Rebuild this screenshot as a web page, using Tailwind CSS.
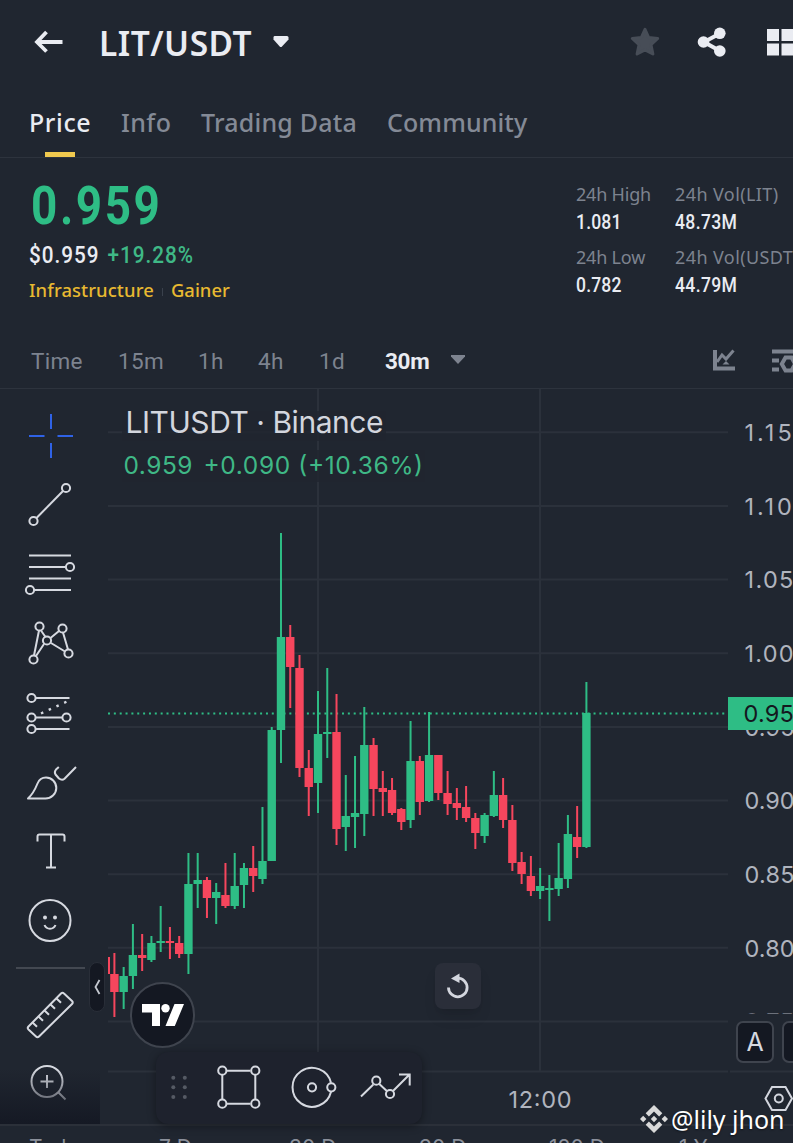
<!DOCTYPE html>
<html lang="en">
<head>
  <meta charset="UTF-8" />
  <meta name="viewport" content="width=device-width, initial-scale=1" />
  <title>LIT/USDT</title>
  <script src="https://cdn.jsdelivr.net/npm/@tailwindcss/browser@4"></script>
</head>
<body class="w-[793px] h-[1143px] overflow-hidden bg-[#202630] font-['Noto_Sans',sans-serif] text-[#eaecf2] whitespace-nowrap">

  <header class="flex items-center h-[84px] pl-[33px]">
    <svg class="w-[30px] h-6 shrink-0" viewBox="0 0 30 24" fill="none" stroke="#eaecf2" stroke-width="3.800"><path d="M29.500 12H4M13.500 2L4 12l9.500 9.500" /></svg>
    <h1 class="ml-9 w-[174px] shrink-0 pt-[3px] text-[33.500px] leading-none font-semibold tracking-[0.500px]">LIT/USDT</h1>
    <svg class="w-4 h-3 shrink-0 -mt-[1px]" viewBox="0 0 16 12" fill="#eaecf2"><path d="M1.500 0h12.500q1.500 0 1.500 1.500v2L9 10.500q-1 1-2.300 0L.5 3.500v-2Q.5 0 1.500 0z" /></svg>
    <svg class="w-[30px] h-[30px] shrink-0 ml-[341px]" viewBox="0 0 30 30" fill="#474d57" stroke="#474d57" stroke-width="3" stroke-linejoin="round"><path d="M15 2.300l3.700 8.200 9 1-6.700 6.200 1.900 9.300-7.900-4-7.900 4 1.900-9.300L2.300 11.500l9-1z" /></svg>
    <svg class="w-[30px] h-[30px] shrink-0 ml-[37px]" viewBox="0 0 30 30" fill="#eaecf2"><path d="M23 6.500L7 15l16 9" fill="none" stroke="#eaecf2" stroke-width="4" /><circle cx="22.800" cy="6.300" r="5.800" /><circle cx="6.500" cy="15" r="5.800" /><circle cx="22.800" cy="24" r="5.800" /></svg>
    <svg class="w-[27px] h-[27px] shrink-0 ml-[40px]" viewBox="0 0 27 27" fill="#eaecf2"><path d="M0 0h12v12H0zM14.500 0h12v12h-12zM0 14.500h12v12H0zM14.500 14.500h12v12h-12z" /></svg>
  </header>

  <nav class="flex h-[74px] border-b border-[#2d333d] pl-[29px] text-[25px] font-medium leading-none text-[#848a96]">
    <div class="relative w-[92px] pt-[26px] tracking-[0.600px] text-[#eaecf2]">Price<span class="absolute left-4 bottom-0 w-[30px] h-[5px] bg-[#f0c94e]"></span></div>
    <div class="w-[80px] pt-[26px] tracking-[0.400px]">Info</div>
    <div class="w-[186px] pt-[26px] tracking-[0.200px]">Trading Data</div>
    <div class="pt-[26px] tracking-[0.100px]">Community</div>
  </nav>

  <section class="flex h-[165px]">
    <div class="w-[576px] shrink-0 pl-[29px]">
      <div class="mt-[21px] ml-[2px] h-[54px] text-[54px] leading-[54px] font-bold font-[Roboto] origin-left scale-x-[0.850] tracking-[3px] text-[#2ebd85]">0.959</div>
      <div class="mt-[9px] h-7 leading-7 text-[23px] font-medium font-[Roboto] flex gap-[9px] origin-left scale-x-[0.900] tracking-[1.100px]">
        <span>$0.959</span><span class="text-[#3fb886]">+19.28%</span>
      </div>
      <div class="mt-[6px] h-7 flex items-center text-[18.400px] font-medium text-[#e8b930]">
        <span class="w-[133px] tracking-[0.100px]">Infrastructure</span><span class="w-px h-2 mt-1 bg-[#3a414c]"></span><span class="ml-2">Gainer</span>
      </div>
    </div>
    <div class="pt-[22px] w-[99px] shrink-0 text-[18px] tracking-[-0.200px] text-[#7d838f]">
      <div class="h-[29px] leading-[29px]">24h High</div>
      <div class="h-[27px] leading-[27px] mb-[7px] font-[Roboto] font-medium text-[19.500px] origin-left scale-x-[0.900] tracking-[0.200px] text-[#eaecf2]">1.081</div>
      <div class="h-[29px] leading-[29px]">24h Low</div>
      <div class="h-[27px] leading-[27px] font-[Roboto] font-medium text-[19.500px] origin-left scale-x-[0.900] tracking-[0.200px] text-[#eaecf2]">0.782</div>
    </div>
    <div class="pt-[22px] w-[118px] shrink-0 overflow-hidden text-[18px] tracking-[0.400px] text-[#7d838f]">
      <div class="h-[29px] leading-[29px]">24h Vol(LIT)</div>
      <div class="h-[27px] leading-[27px] mb-[7px] font-[Roboto] font-medium text-[19.500px] origin-left scale-x-[0.900] text-[#eaecf2]">48.73M</div>
      <div class="h-[29px] leading-[29px]">24h Vol(USDT)</div>
      <div class="h-[27px] leading-[27px] font-[Roboto] font-medium text-[19.500px] origin-left scale-x-[0.900] text-[#eaecf2]">44.79M</div>
    </div>
  </section>

  <div class="flex items-center h-[66px] pt-[12px] pl-[31px] border-b border-[#2d333d] font-[Roboto] text-[22.500px] tracking-[0.300px] text-[#7d838f]">
    <span class="w-[87px] shrink-0">Time</span>
    <span class="w-[80px] shrink-0">15m</span>
    <span class="w-[60px] shrink-0">1h</span>
    <span class="w-[61px] shrink-0">4h</span>
    <span class="w-[66px] shrink-0">1d</span>
    <span class="w-[66px] shrink-0 font-bold tracking-[-0.300px] text-[#eaecf2]">30m</span>
    <svg class="w-[14px] h-[9px] shrink-0 -mt-[4px]" viewBox="0 0 14 9" fill="#7d838f"><path d="M0 0h14v1.500L7 9 0 1.500z" /></svg>
    <svg class="w-[22px] h-[22px] shrink-0 ml-[248px] -mt-[3px]" viewBox="0 0 22 22" fill="none" stroke="#7d838f" stroke-width="3"><path d="M2 1v18.500h20" stroke-width="4" /><path d="M4 13l5-7 4 4 7.500-8.500" /><path d="M9.500 15.500l3.500-3.500 3.500 3.500z" fill="#7d838f" stroke="none" /></svg>
    <svg class="w-[30px] h-[24px] shrink-0 ml-[37px] -mt-px" viewBox="0 0 30 24"><path d="M0 2.500h30M0 11.500h7M0 20.500h7" stroke="#7d838f" stroke-width="4" /><path d="M13.500 8.500h6l3.700 6.500-3.700 6.500h-6L9.800 15z" fill="none" stroke="#7d838f" stroke-width="4" /></svg>
  </div>

  <main class="relative flex h-[735px]">
    <!-- drawing tools -->
    <aside class="relative w-[100px] h-[735px] shrink-0 pt-[13px] flex flex-col items-center">
      <svg class="w-[60px] h-[69px] shrink-0" viewBox="0 -4.500 60 69" fill="none" stroke="#2f62e6" stroke-width="2"><path d="M31 7.500v15M31 36.500v15M9 29.500h15.500M37.500 29.500H53" /></svg>
      <svg class="w-[60px] h-[69px] shrink-0" viewBox="0 -4.500 60 69" fill="none" stroke="#d6d9e0" stroke-width="2"><circle cx="13.500" cy="45.500" r="4.100" /><circle cx="46" cy="12.500" r="4.100" /><path d="M16.500 42.500L43 15.500" /></svg>
      <svg class="w-[60px] h-[69px] shrink-0" viewBox="0 -4.500 60 69" fill="none" stroke="#d6d9e0" stroke-width="2"><path d="M9 11h42M9 22.500h37M9 34h42M14 45.500h37" /><circle cx="50" cy="22.500" r="4.100" /><circle cx="10" cy="45.500" r="4.100" /></svg>
      <svg class="w-[60px] h-[69px] shrink-0" viewBox="0 -4.500 60 69" fill="none" stroke="#d6d9e0" stroke-width="2"><path d="M19 17l-5 25M21 17l4.500 6.500M30.500 24.500l8.500-7M24 30.500l-8 12M31 29.500l14 8.500M43 19l5 17" /><circle cx="19.500" cy="13" r="4.100" /><circle cx="42.500" cy="15" r="4.100" /><circle cx="27" cy="27" r="4.100" /><circle cx="13.500" cy="46" r="4.100" /><circle cx="48.500" cy="40" r="4.100" /></svg>
      <svg class="w-[60px] h-[69px] shrink-0" viewBox="0 -4.500 60 69" fill="none" stroke="#d6d9e0" stroke-width="2"><path d="M16 15.500h33.500M16 35h26M16 46.500h33.500" /><path d="M21 31l26-12" stroke-dasharray="2.500 6" stroke-width="2.400" /><circle cx="11.500" cy="15.500" r="4.100" /><circle cx="11.500" cy="35" r="4.100" /><circle cx="46.500" cy="35" r="4.100" /><circle cx="11.500" cy="46.500" r="4.100" /></svg>
      <svg class="w-[60px] h-[69px] shrink-0" viewBox="0 -4.500 60 69" fill="none" stroke="#d6d9e0" stroke-width="2" stroke-linejoin="round"><path d="M8 47h17.500c5.500 0 10.800-4.500 10.800-10.500S31.500 26 26 26c-4 0-7 2.200-8.500 6C15.500 37 13.500 42 8 47z" /><path d="M38.800 15.500L36 18q-2 2.500-.5 5l3.500 4q3 2.300 5.500.3L56 15.500" /></svg>
      <svg class="w-[60px] h-[69px] shrink-0" viewBox="0 -4.500 60 69" fill="none" stroke="#d6d9e0" stroke-width="2"><path d="M17.500 21v-5q0-2 2-2h23q2 0 2 2v5M31 14v33M26 47h10" /></svg>
      <svg class="w-[60px] h-[69px] shrink-0" viewBox="0 -4.500 60 69" fill="none" stroke="#d6d9e0" stroke-width="2"><circle cx="30" cy="31" r="20.500" /><path d="M24.500 35.500c2 5 9 5 11 0" /><circle cx="25" cy="28" r="2" fill="#d6d9e0" stroke="none" /><circle cx="35" cy="28" r="2" fill="#d6d9e0" stroke="none" /></svg>
      <div class="mt-[13px] mb-[11px] w-[69px] h-[2px] shrink-0 bg-[#434851]"></div>
      <svg class="w-[60px] h-[69px] shrink-0" viewBox="0 -4.500 60 69" fill="none" stroke="#d6d9e0" stroke-width="2" stroke-linejoin="round"><path d="M8.500 42L41 9q1.500-1.500 3 0l8 7.500q1.500 1.500 0 3L19 52q-1.500 1.500-3 0l-7.500-7q-1.500-1.500 0-3z" /><path d="M12.500 38l4.500 4.300M18.500 32l4.500 4.300M24.500 26l4.500 4.300M30.500 20l4.500 4.300M36.500 14l4.500 4.300" /></svg>
      <svg class="w-[60px] h-[69px] shrink-0" viewBox="0 -4.500 60 69" fill="none" stroke="#d6d9e0" stroke-width="2"><circle cx="27" cy="28" r="15.500" /><path d="M27 21.500v13M20.500 28h13M38.500 39l7 7" /></svg>
      <div class="absolute left-0 bottom-0 w-[100px] h-[55px] bg-linear-to-b from-[#151924]/0 to-[#151924]"></div>
    </aside>

    <!-- chart -->
    <svg id="chart" class="w-[693px] h-[735px] shrink-0" viewBox="100 389 693 735" font-family="Inter, sans-serif">
      <defs><clipPath id="scale"><path d="M728 389h65v624.500h-65z" /></clipPath></defs>
      <g id="grid" stroke="#2b313b" stroke-width="2"></g>
      <path d="M108 1071.500h620M730 1071.500h63" stroke="#2b313b" stroke-width="2" />
      <path d="M108 713.500h620" stroke="#2ebd85" stroke-width="2" stroke-dasharray="2 3.850" />
      <g id="candles"></g>
      <path d="M122 411h264v30H122zM122 450h303v32H122z" fill="#202630" fill-opacity=".8" />
      <text x="125.500" y="433" font-size="30" fill="#d3d6de" textLength="258">LITUSDT · Binance</text>
      <text x="123.500" y="474" font-size="24.500" fill="#3fb886" textLength="69">0.959</text>
      <text x="203.500" y="474" font-size="24.500" fill="#3fb886" textLength="219.500">+0.090 (+10.36%)</text>
      <g id="labels" font-size="23.500" fill="#b0b4be" clip-path="url(#scale)"></g>
      <path d="M728 697h65v33h-65z" fill="#2ebd85" />
      <text x="743.500" y="722" font-size="23.500" fill="#14181f" textLength="65">0.959</text>
      <text x="508.500" y="1107.500" font-size="23.500" fill="#b0b4be" textLength="63">12:00</text>
      <g fill="#141822" stroke="#3f444e" stroke-width="2">
        <rect x="737" y="1022" width="36" height="40" rx="6" />
        <rect x="783" y="1022" width="36" height="40" rx="6" />
      </g>
      <text x="746.500" y="1051" font-size="25" fill="#d6d9e0">A</text>
      <g fill="none" stroke="#d3d6de" stroke-width="2"><path d="M772 1087h13.500l6.500 11.500-6.500 11.500H772l-6.500-11.500z" /><circle cx="778.800" cy="1098.500" r="4" /></g>
    </svg>

    <!-- toolbar collapse handle -->
    <div class="absolute left-[89px] top-[573px] w-4 h-[50px] rounded-lg bg-[#141822] border border-[#292e38] flex items-center justify-center">
      <svg class="w-2 h-4" viewBox="0 0 8 16" fill="none" stroke="#c4c8d0" stroke-width="1.800"><path d="M6.500 1L2.500 8l4 7" /></svg>
    </div>

    <div class="absolute left-[130px] top-[593px] w-[65px] h-[66px] rounded-full bg-[#141822] border-2 border-[#3f444e] flex items-center justify-center">
      <svg class="w-[42px] h-[22px]" viewBox="0 0 42 22" fill="#fff"><path d="M0 0h18v22H10V8.500H0zM32.500 0H42l-9.200 22h-9.300z" /><circle cx="23.500" cy="4.200" r="4.200" /></svg>
    </div>

    <button class="absolute left-[435px] top-[574px] w-[46px] h-[46px] rounded-lg bg-[#2a2e39] shadow-lg flex items-center justify-center">
      <svg class="w-6 h-7" viewBox="0 0 24 28" fill="none" stroke="#d3d6de" stroke-width="2.800"><path d="M2.500 15.500a9.300 9.300 0 1 0 9.300-9.300H10" /><path d="M5 6.500l8.500-5v9.500z" fill="#d3d6de" stroke="none" /></svg>
    </button>

    <div class="absolute left-[156px] top-[663px] w-[266px] h-[72px] rounded-xl bg-[#1e222d] shadow-[0_2px_8px_rgba(0,0,0,0.4)]">
      <svg class="w-[266px] h-[72px]" viewBox="156 1052 266 72" fill="none" stroke="#d6d9e0" stroke-width="2">
        <g fill="#555a64" stroke="none"><circle cx="173.300" cy="1077.700" r="2" /><circle cx="184.800" cy="1077.700" r="2" /><circle cx="173.300" cy="1087.300" r="2" /><circle cx="184.800" cy="1087.300" r="2" /><circle cx="173.300" cy="1097" r="2" /><circle cx="184.800" cy="1097" r="2" /></g>
        <path d="M227 1070.700h23.500M227 1103.700h23.500M222.300 1075v24M255.300 1075v24" /><circle cx="222.300" cy="1070.700" r="4.100" /><circle cx="255.300" cy="1070.700" r="4.100" /><circle cx="222.300" cy="1103.700" r="4.100" /><circle cx="255.300" cy="1103.700" r="4.100" />
        <path d="M331 1082.800a19.500 19.500 0 1 0 0 9" /><circle cx="312" cy="1087.300" r="4.100" /><circle cx="331.300" cy="1087.300" r="4.100" />
        <path d="M361 1096.500l12.300-12M379.300 1084l7.500 7M393 1091l16.500-16.500M399 1074.500h10.700v11" /><circle cx="376.300" cy="1080.700" r="4.100" /><circle cx="390" cy="1094" r="4.100" />
      </svg>
    </div>
  </main>

  <footer class="h-[19px] overflow-hidden border-t-2 border-[#2b3039] pl-[29px] pt-[9px] flex font-[Inter] text-[21px] leading-[26px] text-[#8b909b]">
    <span class="w-[130px] shrink-0">Today</span>
    <span class="w-[130px] shrink-0">7 Days</span>
    <span class="w-[130px] shrink-0">30 Days</span>
    <span class="w-[130px] shrink-0">90 Days</span>
    <span class="w-[130px] shrink-0">180 Days</span>
    <span class="shrink-0">1 Year</span>
  </footer>

  <!-- author mark -->
  <div class="absolute left-[640px] top-[1102px] flex items-center gap-[3px] text-white text-[25px] leading-[34px] [text-shadow:0_1px_2px_rgba(0,0,0,0.5)]">
    <svg class="w-7 h-7" viewBox="0 0 28 28" fill="#d9d9d9"><path d="M14 0l8.300 8.300-3.200 3.200L14 6.400l-5.100 5.100-3.200-3.200zM14 28l8.300-8.300-3.200-3.200-5.100 5.100-5.100-5.100-3.200 3.200zM14 10.800l3.200 3.200-3.200 3.200-3.200-3.200zM3.200 10.800L6.400 14l-3.200 3.200L0 14zM24.800 10.800L28 14l-3.200 3.200-3.200-3.200z" /></svg>
    <span>@lily jhon</span>
  </div>

  <script>
    const el = (name, attrs, parent) => {
      const node = document.createElementNS('http://www.w3.org/2000/svg', name);
      for (const key in attrs) node.setAttribute(key, attrs[key]);
      parent.appendChild(node);
      return node;
    };

    // Grid and price scale
    const grid = document.getElementById('grid');
    const labels = document.getElementById('labels');
    const prices = ['1.150', '1.100', '1.050', '1.000', '0.950', '0.900', '0.850', '0.800', '0.750'];
    prices.forEach((price, i) => {
      const y = 432.3 + i * 73.65;
      el('path', { d: `M108 ${y}H728` }, grid);
      el('text', { x: 744.5, y: y + 8.7, textLength: 65 }, labels).textContent = price;
    });
    [318, 540].forEach(x => el('path', { d: `M${x} 389V1071` }, grid));

    // Candles: direction, high, body top, body bottom, low
    const data = [
      ['r', 953, 974, 992, 1017], ['g', 967, 976, 992, 1009], ['g', 924, 955, 976, 989], ['r', 934, 955, 958, 971],
      ['g', 936, 943, 960, 962], ['g', 906, 941, 943, 952], ['r', 927, 941, 943, 959], ['r', 936, 943, 954, 958],
      ['g', 853, 884, 954, 974], ['g', 853, 880, 884, 908], ['r', 877, 880, 898, 918], ['g', 883, 892, 898, 924],
      ['r', 863, 895, 906, 908], ['g', 853, 886, 906, 909], ['g', 863, 868, 885, 908], ['r', 846, 868, 876, 892],
      ['g', 807, 861, 879, 884], ['g', 727, 730, 861, 861], ['g', 533, 637, 730, 763], ['r', 625, 637, 667, 708],
      ['r', 655, 668, 768, 777], ['r', 750, 768, 787, 816], ['g', 691, 734, 783, 813], ['g', 668, 732, 734, 758],
      ['r', 694, 732, 829, 845], ['g', 775, 816, 827, 851], ['g', 756, 813, 817, 848], ['g', 707, 745, 814, 836],
      ['r', 738, 745, 789, 816], ['r', 771, 788, 792, 816], ['r', 778, 790, 813, 815], ['r', 808, 809, 822, 830],
      ['g', 721, 761, 820, 828], ['r', 756, 761, 802, 815], ['g', 712, 755, 801, 802], ['r', 755, 755, 793, 800],
      ['r', 771, 793, 804, 815], ['r', 788, 803, 808, 820], ['r', 786, 807, 818, 822], ['r', 813, 818, 833, 849],
      ['g', 813, 815, 836, 843], ['g', 771, 795, 816, 817], ['r', 778, 795, 820, 828], ['r', 805, 820, 863, 871],
      ['r', 852, 862, 874, 884], ['r', 856, 876, 891, 896], ['g', 868, 886, 891, 899], ['g', 875, 888, 890, 921],
      ['g', 843, 878, 889, 896], ['g', 815, 834, 879, 888], ['r', 806, 837, 847, 858], ['g', 682, 713, 847, 848],
    ];
    const colors = { g: '#2ebd85', r: '#f6465d' };
    const candles = document.getElementById('candles');
    el('rect', { x: 108, y: 957, width: 2, height: 17, fill: colors.r }, candles);
    data.forEach(([dir, high, top, bottom, low], i) => {
      const x = 114.4 + i * 9.255;
      el('rect', { x: x - 1, y: high, width: 2, height: low - high, fill: colors[dir] }, candles);
      el('rect', { x: x - 4.2, y: top, width: 8.4, height: bottom - top, fill: colors[dir] }, candles);
    });
  </script>
</body>
</html>
